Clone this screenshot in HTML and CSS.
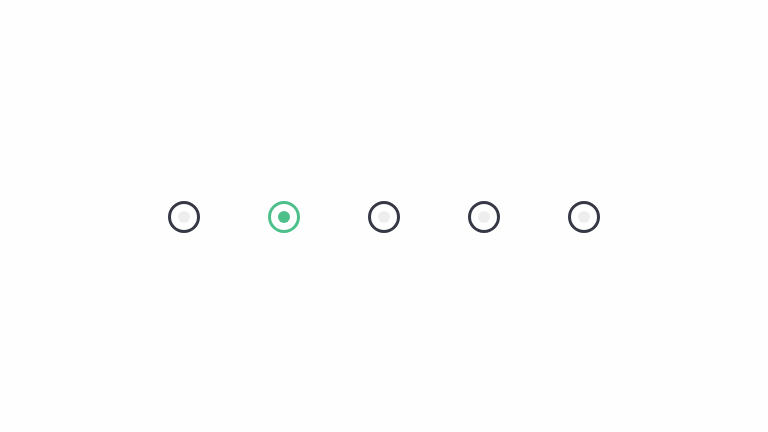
FILE: index.html
```html
<!DOCTYPE html>
<html>
<head>
<meta charset="utf-8">
<link rel="stylesheet" href="styles.css">
</head>
<body>
<div class="stage">
  <div class="radios">
    <span class="radio"><span class="dot"></span></span>
    <span class="radio checked"><span class="dot"></span></span>
    <span class="radio"><span class="dot"></span></span>
    <span class="radio"><span class="dot"></span></span>
    <span class="radio"><span class="dot"></span></span>
  </div>
</div>
</body>
</html>
```
FILE: styles.css
```css
html, body {
  margin: 0;
  padding: 0;
  background: #fefefe;
  font-family: "Liberation Sans", sans-serif;
}
.stage {
  width: 768px;
  height: 432px;
  display: flex;
  align-items: center;
  justify-content: center;
  padding-top: 2px;
  box-sizing: border-box;
}
.radios {
  display: flex;
  gap: 68px;
}
.radio {
  width: 32px;
  height: 32px;
  box-sizing: border-box;
  border: 3.5px solid #373846;
  border-radius: 50%;
  display: flex;
  align-items: center;
  justify-content: center;
  background: #fff;
}
.dot {
  width: 12px;
  height: 12px;
  border-radius: 50%;
  background: #eeeeee;
}
.radio.checked {
  border-color: #4cbf8b;
}
.radio.checked .dot {
  background: #4cbf8b;
}
```
